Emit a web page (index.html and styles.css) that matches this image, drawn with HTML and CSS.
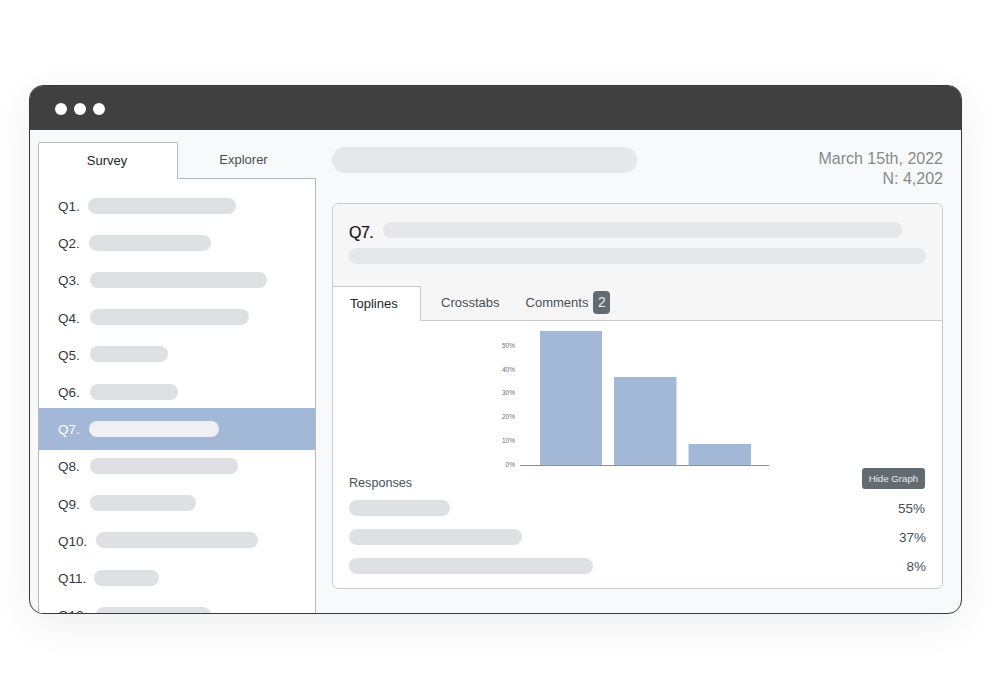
FILE: index.html
```html
<!DOCTYPE html>
<html lang="en">
<head>
<meta charset="utf-8">
<title>Survey results</title>
<link rel="stylesheet" href="styles.css">
</head>
<body>
<div class="window">
  <header class="titlebar">
    <span class="dot"></span><span class="dot"></span><span class="dot"></span>
  </header>
  <div class="content">
    <aside class="sidebar">
      <div class="side-tabs">
        <div class="side-tab current">Survey</div>
        <div class="side-tab other">Explorer</div>
      </div>
      <ul class="questions">
        <li class="q"><span class="q-label">Q1.</span><span class="pill b148"></span></li>
        <li class="q"><span class="q-label g10">Q2.</span><span class="pill b122"></span></li>
        <li class="q"><span class="q-label g11">Q3.</span><span class="pill b177"></span></li>
        <li class="q"><span class="q-label g11">Q4.</span><span class="pill b159"></span></li>
        <li class="q"><span class="q-label g11">Q5.</span><span class="pill b78"></span></li>
        <li class="q"><span class="q-label g11">Q6.</span><span class="pill b88"></span></li>
        <li class="q active"><span class="q-label g10">Q7.</span><span class="pill b130"></span></li>
        <li class="q"><span class="q-label g11">Q8.</span><span class="pill b148"></span></li>
        <li class="q"><span class="q-label g11">Q9.</span><span class="pill b106"></span></li>
        <li class="q"><span class="q-label g10">Q10.</span><span class="pill b162"></span></li>
        <li class="q"><span class="q-label">Q11.</span><span class="pill b65"></span></li>
        <li class="q"><span class="q-label g10">Q12.</span><span class="pill b115"></span></li>
      </ul>
    </aside>
    <main class="main">
      <div class="topline">
        <div class="title-pill"></div>
        <div class="meta">March 15th, 2022<br>N: 4,202</div>
      </div>
      <section class="card">
        <div class="card-head">
          <div class="head-row">
            <span class="q7">Q7.</span>
            <span class="head-pill first"></span>
          </div>
          <div class="head-pill second"></div>
          <div class="card-tabs">
            <div class="card-tab current">Toplines</div>
            <div class="card-tab crosstabs">Crosstabs</div>
            <div class="card-tab comments">Comments <span class="badge">2</span></div>
          </div>
        </div>
        <div class="card-body">
          <svg class="chart" width="280" height="146" viewBox="0 0 280 146">
            <g class="ticks">
              <text x="16" y="27">50%</text>
              <text x="16" y="51">40%</text>
              <text x="16" y="74">30%</text>
              <text x="16" y="98">20%</text>
              <text x="16" y="122">10%</text>
              <text x="16" y="146">0%</text>
            </g>
            <rect class="bar" x="41" y="10" width="62" height="134"></rect>
            <rect class="bar" x="115" y="56" width="62.500" height="88"></rect>
            <rect class="bar" x="189.500" y="123" width="62.500" height="21"></rect>
            <rect class="axis" x="21" y="144" width="249" height="1"></rect>
          </svg>
          <div class="resp-head">
            <span class="resp-title">Responses</span>
            <button class="hide-btn" type="button">Hide Graph</button>
          </div>
          <div class="resp"><span class="resp-pill r101"></span><span class="pct">55%</span></div>
          <div class="resp"><span class="resp-pill r173"></span><span class="pct nudge">37%</span></div>
          <div class="resp"><span class="resp-pill r244"></span><span class="pct nudge">8%</span></div>
        </div>
      </section>
    </main>
  </div>
</div>
</body>
</html>
```
FILE: styles.css
```css
* { box-sizing: border-box; }
html, body { margin: 0; height: 700px; overflow: hidden; background: #fff; }
body { font-family: "Liberation Sans", Arial, sans-serif; padding: 85px 0 0 29px; }

.window {
  width: 933px;
  height: 529px;
  border: 1px solid #3a3a3a;
  border-radius: 14px;
  overflow: hidden;
  background: #f8f9fb;
  box-shadow: 0 10px 40px rgba(0, 0, 0, 0.07);
  display: flex;
  flex-direction: column;
}
.titlebar {
  flex: 0 0 44px;
  background: #404040;
  display: flex;
  align-items: center;
  gap: 7px;
  padding: 2px 0 0 25px;
}
.dot { width: 12px; height: 12px; border-radius: 50%; background: #fff; }

.content { flex: 1; display: flex; min-height: 0; padding: 12px 18px 0 8px; gap: 16px; }

.sidebar { width: 278px; flex: none; display: flex; flex-direction: column; min-height: 0; }
.side-tabs { display: flex; height: 37px; flex: none; }
.side-tab {
  text-align: center;
  font-size: 13px;
  line-height: 36px;
  color: #495057;
}
.side-tab.other { width: 138px; padding-right: 7px; border-bottom: 1px solid #b5b8bb; }
.side-tab.current {
  width: 140px;
  padding-right: 2px;
  color: #212529;
  background: #fff;
  border: 1px solid #b5b8bb;
  border-bottom: 0;
  border-radius: 2px 2px 0 0;
}
.questions {
  list-style: none;
  margin: 0;
  padding: 8px 0 0;
  flex: 1;
  background: #fff;
  border: 1px solid #b5b8bb;
  border-width: 0 1px;
  overflow: hidden;
}
.q { height: 37.2px; display: flex; align-items: center; padding-left: 19px; font-size: 13.500px; color: #343a40; }
.q-label { margin-right: 8px; padding-top: 2px; }
.q-label.g10 { margin-right: 9px; }
.q-label.g11 { margin-right: 10px; }
.q.active { background: #a3b8d7; color: #fff; height: 42px; margin: -2.400px 0; }
.pill { height: 16px; border-radius: 8px; background: #dfe0e4; }
.q.active .pill { background: #eef0f4; }
.b148 { width: 148px; } .b122 { width: 122px; } .b177 { width: 177px; }
.b159 { width: 159px; } .b78 { width: 78px; } .b88 { width: 88px; }
.b130 { width: 130px; } .b106 { width: 106px; } .b162 { width: 162px; }
.b65 { width: 65px; } .b115 { width: 115px; }

.main { flex: 1; min-width: 0; }
.topline { display: flex; justify-content: space-between; align-items: flex-start; height: 61px; padding-top: 5px; }
.title-pill { width: 305px; height: 26px; border-radius: 13px; background: #e5e7e9; }
.meta { text-align: right; font-size: 16px; line-height: 20px; color: #87898b; margin-top: 2px; }

.card { height: 386px; border: 1px solid #c9cbcb; border-radius: 6px; background: #fff; overflow: hidden; }
.card-head { background: #f6f6f6; padding: 18px 16px 0; height: 117px; border-bottom: 1px solid #c9cbcb; }
.head-row { display: flex; align-items: center; height: 18px; }
.q7 { font-size: 16px; letter-spacing: -0.500px; color: #111; margin-right: 10px; padding-top: 4px; -webkit-text-stroke: 0.200px #111; }
.head-pill { display: block; height: 16px; border-radius: 8px; background: #e5e7e9; }
.head-pill.first { width: 519px; margin-top: -2px; }
.head-pill.second { width: 577px; margin-top: 8px; }
.card-tabs { display: flex; margin: 22px 0 0 -16px; height: 35px; font-size: 13px; color: #495057; }
.card-tab { line-height: 33px; }
.card-tab.current {
  width: 88px;
  padding-left: 17px;
  height: 35px;
  background: #fff;
  color: #212529;
  border: 1px solid #c9cbcb;
  border-width: 1px 1px 0 0;
}
.crosstabs { margin-left: 20px; }
.comments { margin-left: 26px; display: flex; align-items: center; gap: 5px; height: 33px; }
.badge {
  width: 17px;
  height: 23px;
  border-radius: 4px;
  background: #636b72;
  color: #e9ecef;
  font-size: 14px;
  line-height: 23px;
  text-align: center;
}

.card-body { padding: 0 17px 0 16px; }
.chart { display: block; margin: 0 0 0 150px; }
.ticks { opacity: 0.99; }
.ticks text { font-size: 6.500px; fill: #6a6d70; text-anchor: end; }
.bar { fill: #a3b8d7; }
.axis { fill: #8b8d90; }
.resp-head { display: flex; justify-content: space-between; align-items: center; height: 21px; margin-top: 1px; margin-bottom: 11px; }
.resp-title { font-size: 12.600px; color: #495057; padding-top: 8px; }
.hide-btn {
  width: 63px;
  height: 21px;
  padding: 0;
  border: 0;
  border-radius: 3px;
  background: #636b72;
  color: #e9ecef;
  font: 9.700px "Liberation Sans", Arial, sans-serif;
}
.resp { display: flex; justify-content: space-between; align-items: center; height: 16px; margin-bottom: 13px; }
.resp-pill { height: 16px; border-radius: 8px; background: #dfe0e4; }
.r101 { width: 101px; } .r173 { width: 173px; } .r244 { width: 244px; }
.pct { font-size: 13.500px; color: #495057; }
.pct.nudge { margin-right: -1px; }
```
